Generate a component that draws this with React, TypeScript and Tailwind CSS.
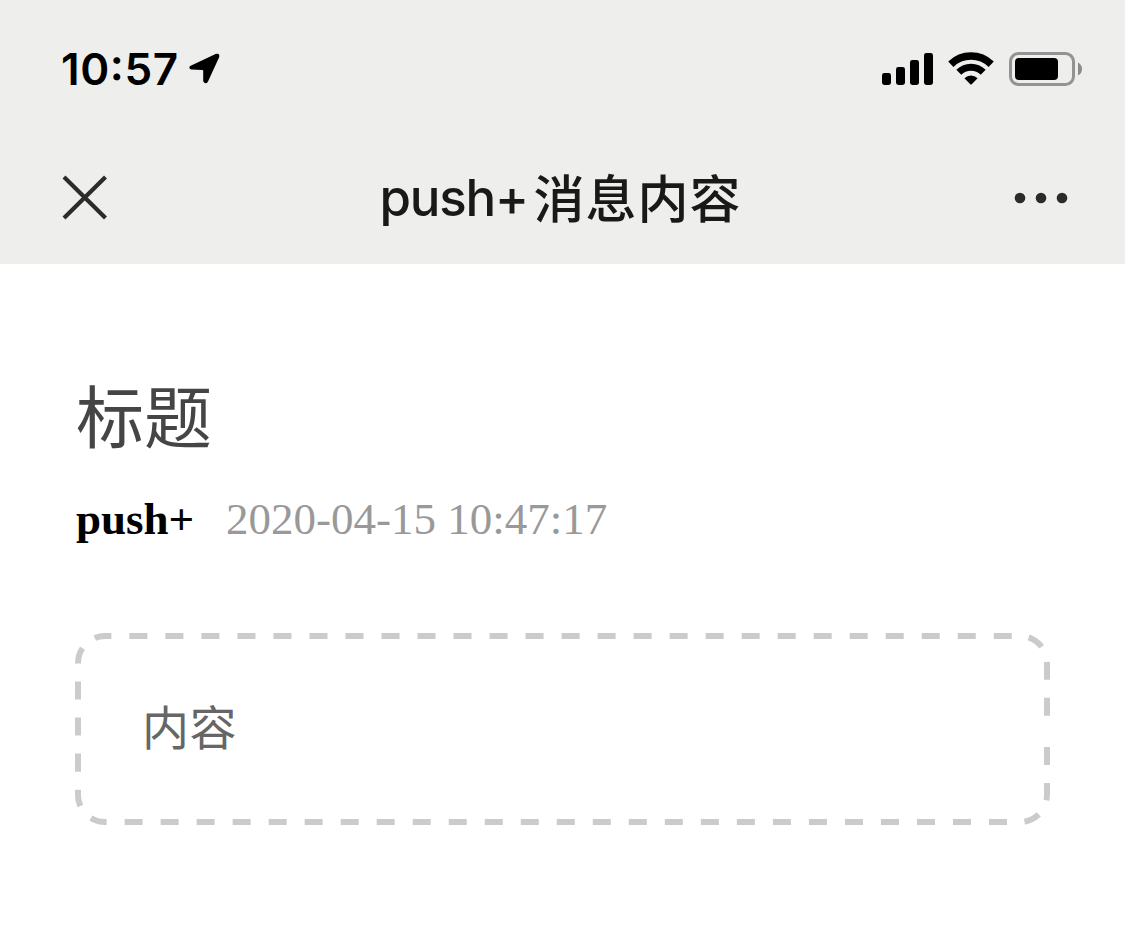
function StatusBar() {
  return (
    <div className="flex h-[136px] items-center justify-between pl-[61px] pr-[43px] pt-0.5">
      <div className="flex items-center">
        <span className="w-[128px] whitespace-nowrap text-[44px] font-semibold leading-none tracking-[0.6px] text-black [font-feature-settings:'case']">
          10:57
        </span>
        <svg width="32" height="32" viewBox="0 0 32 32">
          <path
            d="M2 13.4 L27.5 1.6 Q30 1 29.4 3.8 L18.4 28 Q16.4 31 15 28 V17.8 Q15 16.2 13.4 16.2 L2.4 15.8 Q0 14.8 2 13.4 Z"
            stroke="#000"
            strokeWidth="1.6"
            strokeLinejoin="round"
          />
        </svg>
      </div>
      <div className="flex items-center">
        <svg width="51" height="33" viewBox="0 0 51 33">
          <rect x="0" y="20" width="9" height="12" rx="2.4" />
          <rect x="14" y="14" width="9" height="18" rx="2.4" />
          <rect x="28" y="7" width="9" height="25" rx="2.4" />
          <rect x="42" y="0" width="9" height="32" rx="2.4" />
        </svg>
        <svg className="ml-[15px]" width="46" height="34" viewBox="0 0 46 34">
          <g fill="none" stroke="#000">
            <path d="M2.8 12.2 A29 29 0 0 1 43.2 12.2" strokeWidth="7.5" />
            <path d="M10.8 20.2 A17.4 17.4 0 0 1 35.2 20.2" strokeWidth="7" />
          </g>
          <path d="M16.4 26.2 A9.4 9.4 0 0 1 29.6 26.2 L23.7 32.2 Q23 33 22.3 32.2 Z" />
        </svg>
        <svg className="ml-[15px]" width="73" height="34" viewBox="0 0 73 34">
          <rect x="1.5" y="1.5" width="63" height="31" rx="8" fill="none" stroke="#939393" strokeWidth="3" />
          <rect x="6" y="6" width="43" height="22" rx="4" />
          <path d="M69 10.5 Q73 12.5 73 17 Q73 21.5 69 23.5 Z" fill="#8b8b8b" />
        </svg>
      </div>
    </div>
  );
}

function NavBar() {
  return (
    <div className="grid h-[123px] grid-cols-[1fr_auto_1fr] items-center pl-[62px] pr-[57px]">
      <svg width="46" height="46" viewBox="0 0 46 46" stroke="#2b2b2b" strokeWidth="4.2">
        <path d="M2 2 L43.5 43 M43.5 2 L2 43" />
      </svg>
      <h1 className="mr-[9px] flex items-center whitespace-nowrap font-medium leading-none text-[#191919]">
        <span className="w-[154px] text-[51px] tracking-[-1.2px]">push+</span>
        <span className="pt-[3px] text-[51px] tracking-[1px]">消息内容</span>
      </h1>
      <svg className="justify-self-end" width="54" height="12" viewBox="0 0 54 12" fill="#2b2b2b">
        <circle cx="6" cy="6" r="5.3" />
        <circle cx="27" cy="6" r="5.3" />
        <circle cx="48" cy="6" r="5.3" />
      </svg>
    </div>
  );
}

// Dashes run clockwise from the middle of the right edge.
function DashedFrame() {
  const outline =
    "M975 96 V162 A30 30 0 0 1 945 192 H30 A30 30 0 0 1 0 162 V30 A30 30 0 0 1 30 0 H945 A30 30 0 0 1 975 30 V96";
  return (
    <svg className="absolute inset-0" width="975" height="192" viewBox="0 0 975 192">
      <clipPath id="frame">
        <path d={outline} />
      </clipPath>
      <path
        d={outline}
        fill="none"
        stroke="#cbcbcb"
        strokeWidth="12"
        strokeDasharray="18.015 18"
        strokeDashoffset="18"
        clipPath="url(#frame)"
      />
    </svg>
  );
}

export default function App() {
  return (
    <div className="h-[935px] w-[1125px] overflow-hidden bg-white font-[Inter,'Noto_Sans_CJK_SC',sans-serif]">
      <header className="h-[264px] bg-[#eeeeec]">
        <StatusBar />
        <NavBar />
      </header>
      <main className="px-[75px] pt-[108px]">
        <h2 className="pl-px text-[68px] leading-[92px] text-[#454545]">标题</h2>
        <div className="mt-[29px] flex h-[52px] items-center font-['Liberation_Serif',serif] text-[45px] leading-[52px]">
          <strong className="w-[151px] pl-px text-black">push+</strong>
          <span className="whitespace-nowrap text-[#999]">2020-04-15 10:47:17</span>
        </div>
        <div className="relative mt-[88px] flex h-[192px] w-[975px] items-center pl-[67px]">
          <DashedFrame />
          <p className="pb-1 text-[47px] leading-none tracking-[0.5px] text-[#666]">内容</p>
        </div>
      </main>
    </div>
  );
}
